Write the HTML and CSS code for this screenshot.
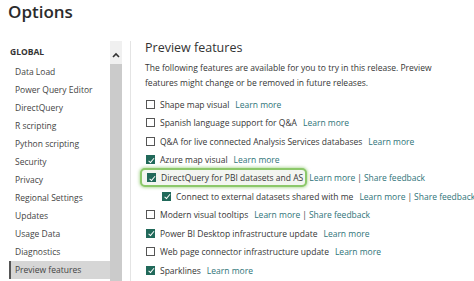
FILE: index.html
```html
<!DOCTYPE html>
<html lang="en">
<head>
    <meta charset="UTF-8">
    <title>Options</title>
    <link rel="stylesheet" href="styles.css">
</head>
<body>
    <div class="window">
        <h1 class="title">Options</h1>

        <div class="panes">
            <nav class="sidebar">
                <div class="nav-list">
                    <div class="section">GLOBAL</div>
                    <div class="nav-item">Data Load</div>
                    <div class="nav-item">Power Query Editor</div>
                    <div class="nav-item">DirectQuery</div>
                    <div class="nav-item">R scripting</div>
                    <div class="nav-item">Python scripting</div>
                    <div class="nav-item">Security</div>
                    <div class="nav-item">Privacy</div>
                    <div class="nav-item">Regional Settings</div>
                    <div class="nav-item">Updates</div>
                    <div class="nav-item">Usage Data</div>
                    <div class="nav-item">Diagnostics</div>
                    <div class="nav-item active">Preview features</div>
                </div>
                <div class="scrollbar">
                    <div class="scroll-btn">
                        <svg width="8" height="6" viewBox="0 0 8 6"><path d="M1 5 L4 2 L7 5" fill="none" stroke="#333" stroke-width="1.6"/></svg>
                    </div>
                    <div class="thumb"></div>
                </div>
            </nav>

            <main class="content">
                <h2>Preview features</h2>
                <p class="intro">The following features are available for you to try in this release. Preview features might change or be removed in future releases.</p>

                <div class="features">
                    <div class="feature"><span class="box"></span>Shape map visual <a class="link">Learn more</a></div>
                    <div class="feature"><span class="box"></span>Spanish language support for Q&amp;A <a class="link">Learn more</a></div>
                    <div class="feature"><span class="box"></span>Q&amp;A for live connected Analysis Services databases <a class="link">Learn more</a></div>
                    <div class="feature"><span class="box checked"></span>Azure map visual <a class="link">Learn more</a></div>
                    <div class="feature">
                        <span class="highlight"><span class="box checked"></span>DirectQuery for PBI datasets and AS</span><a class="link tight">Learn more</a><span class="sep">|</span><a class="link">Share feedback</a>
                    </div>
                    <div class="feature sub"><span class="box checked"></span>Connect to external datasets shared with me <a class="link">Learn more</a><span class="sep">|</span><a class="link">Share feedback</a></div>
                    <div class="feature"><span class="box"></span>Modern visual tooltips <a class="link">Learn more</a><span class="sep">|</span><a class="link">Share feedback</a></div>
                    <div class="feature"><span class="box checked"></span>Power BI Desktop infrastructure update <a class="link">Learn more</a></div>
                    <div class="feature"><span class="box"></span>Web page connector infrastructure update <a class="link">Learn more</a></div>
                    <div class="feature"><span class="box checked"></span>Sparklines <a class="link">Learn more</a></div>
                </div>
            </main>
        </div>
    </div>
</body>
</html>
```

FILE: styles.css
```css
* {
    box-sizing: border-box;
    margin: 0;
    padding: 0;
}

body {
    font-family: 'Open Sans', 'Noto Sans', sans-serif;
    font-size: 8.5px;
    color: #363636;
    background: #fff;
    width: 474px;
    height: 281px;
    overflow: hidden;
}

.title {
    font-size: 17px;
    font-weight: 600;
    line-height: 23px;
    padding-left: 8px;
    color: #2b2b2b;
    margin-bottom: 18px;
}

.panes {
    display: flex;
    height: 240px;
}

/* left navigation */
.sidebar {
    display: flex;
    width: 131px;
    border-right: 1px solid #e4e4e4;
    padding-right: 8px;
}

.nav-list {
    width: 110px;
    padding-top: 2px;
}

.section {
    font-weight: 700;
    font-size: 8.5px;
    line-height: 18px;
    padding-left: 10px;
    margin-bottom: 2px;
    color: #333;
}

.nav-item {
    line-height: 18px;
    margin-left: 9px;
    border-left: 2px solid transparent;
    padding-left: 4px;
    color: #444;
    white-space: nowrap;
}

.nav-item.active {
    background: #d6d6d6;
    border-left-color: #555;
}

.scrollbar {
    width: 12px;
    display: flex;
    flex-direction: column;
}

.scroll-btn {
    height: 23px;
    background: #f0f0f0;
    display: flex;
    justify-content: center;
    padding-top: 11px;
}

.thumb {
    flex: 1;
    background: #cbcbcb;
}

/* content */
.content {
    padding-left: 14px;
    flex: 1;
}

.content h2 {
    font-size: 12.5px;
    font-weight: 400;
    line-height: 14px;
    color: #333;
    margin-bottom: 5px;
}

.intro {
    line-height: 15px;
    width: 300px;
    margin-bottom: 5px;
}

.feature {
    height: 18.45px;
    display: flex;
    align-items: center;
    white-space: nowrap;
}

.feature.sub {
    padding-left: 16px;
}

.box {
    width: 9px;
    height: 9px;
    border: 1px solid #555;
    margin-left: 1px;
    margin-right: 5px;
    flex-shrink: 0;
    position: relative;
}

.box.checked {
    background: #21695a;
    border-color: #21695a;
}

.box.checked::after {
    content: '';
    position: absolute;
    left: 2.5px;
    top: 0.5px;
    width: 2px;
    height: 4.5px;
    border: solid #fff;
    border-width: 0 1.3px 1.3px 0;
    transform: rotate(40deg);
}

.link {
    color: #2f7479;
    margin-left: 6px;
}

.link.tight {
    margin-left: 2px;
}

.sep {
    color: #444;
    margin: 0 2px;
}

.sep + .link {
    margin-left: 0;
}

.highlight {
    display: flex;
    align-items: center;
    margin-left: -5px;
    padding: 2px 2px 2px 4px;
    border: 2px solid #8cc86a;
    border-radius: 5px;
    box-shadow: 0 0 3px 1px rgba(140, 200, 106, 0.6);
    background: #f3f5f1;
}
```
